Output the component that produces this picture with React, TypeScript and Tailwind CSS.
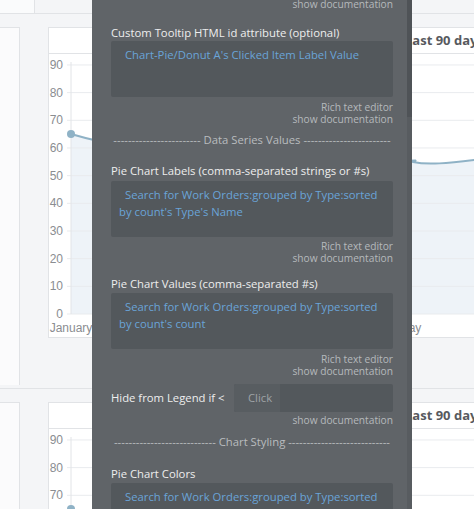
import React from "react";

const TICKS = [90, 80, 70, 60, 50, 40, 30, 20, 10, 0];

function LineChart() {
  // local coords: origin at card body top-left (x=48, y=53 on page)
  const y = (v: number) => 260 - v * 2.767;
  const line = "M22 80 C 90 100, 200 110, 300 108 S 355 106, 364 108 C 378 111, 395 110, 440 104";
  return (
    <svg width="440" height="284" viewBox="0 0 440 284" className="block">
      <path d={`${line} L 440 260 L 22 260 Z`} fill="#eef3f8" />
      {TICKS.map((t) => (
        <g key={t}>
          <line x1="18" x2="440" y1={y(t)} y2={y(t)} stroke="#e9ebee" strokeWidth="1" />
          <text x="14" y={y(t) + 4} textAnchor="end" fontSize="12" fill="#8a8d91" fontFamily="Liberation Sans, Arial, sans-serif">
            {t}
          </text>
        </g>
      ))}
      <line x1="22" x2="22" y1="8" y2="260" stroke="#e2e4e7" strokeWidth="1" />
      <path d={line} fill="none" stroke="#8fb2c6" strokeWidth="2" />
      <circle cx="22" cy="80" r="4" fill="#8fb2c6" />
      <text x="22" y="278" textAnchor="middle" fontSize="12" fill="#8a8d91" fontFamily="Liberation Sans, Arial, sans-serif">January</text>
      <text x="361" y="278" textAnchor="middle" fontSize="12" fill="#8a8d91" fontFamily="Liberation Sans, Arial, sans-serif">May</text>
    </svg>
  );
}

function DashboardRow() {
  return (
    <div className="h-[375px] border-b border-[#e1e3e6] flex items-start">
      <div className="shrink-0 mt-[13px] w-[20px] h-[358px] border-t border-r border-[#e1e3e6] bg-[#fbfbfc]" />
      <div className="shrink-0 mt-[13px] ml-[28px] w-[440px] border-t border-l border-[#e1e3e6] bg-[#fcfcfd]">
        <div className="h-[26px] border-b border-[#e1e3e6] bg-white flex items-center">
          <span className="ml-[356px] text-[13px] font-bold text-[#575a5e] whitespace-nowrap">Last 90 days</span>
        </div>
        <div className="h-[284px] border-b border-[#e1e3e6] bg-white">
          <LineChart />
        </div>
      </div>
    </div>
  );
}

function Captions({ rich = true }: { rich?: boolean }) {
  return (
    <div className="text-right text-[10.2px] leading-[12px] text-[#b5b9bc]">
      {rich && <div>Rich text editor</div>}
      <div>show documentation</div>
    </div>
  );
}

function Divider({ title, dashes }: { title: string; dashes: number }) {
  const d = "-".repeat(dashes);
  return (
    <div className="h-[16px] leading-[16px] text-[11.3px] text-[#b9bcbf] text-center whitespace-nowrap overflow-hidden">
      {d} {title} {d}
    </div>
  );
}

function RichInput({ lines, h = "h-[56px]" }: { lines: string[]; h?: string }) {
  return (
    <div className={`${h} rounded-[2px] bg-[#53585c] pl-[8px] pr-[8px] pt-[5px] text-[11.3px] leading-[17px] text-[#6aa4d8] overflow-hidden`}>
      {lines.map((l, i) => (
        <div key={i} className={i === 0 ? "pl-[6px] whitespace-nowrap" : "whitespace-nowrap"}>
          {l}
        </div>
      ))}
    </div>
  );
}

function PropertyPanel() {
  return (
    <div className="absolute left-[92px] top-0 w-[320px] h-[509px] bg-[#606468] overflow-hidden">
      <div className="absolute right-0 top-0 w-[5px] h-full bg-[#585c60]" />
      <div className="absolute right-0 top-0 w-[5px] h-[117px] bg-[#4f5357]" />
      <div className="px-[19px] -mt-[2px] text-[11.3px] text-[#eeeeee]">
        <Captions rich={false} />

        <div className="mt-[15px] leading-[16px]">Custom Tooltip HTML id attribute (optional)</div>
        <RichInput lines={["Chart-Pie/Donut A's Clicked Item Label Value"]} />
        <div className="mt-[4px]">
          <Captions />
        </div>

        <div className="mt-[7px]">
          <Divider title="Data Series Values" dashes={24} />
        </div>

        <div className="mt-[15px] mb-[2px] leading-[16px]">Pie Chart Labels (comma-separated strings or #s)</div>
        <RichInput lines={["Search for Work Orders:grouped by Type:sorted", "by count's Type's Name"]} />
        <div className="mt-[3px]">
          <Captions />
        </div>

        <div className="mt-[12px] mb-[1px] leading-[16px]">Pie Chart Values (comma-separated #s)</div>
        <RichInput lines={["Search for Work Orders:grouped by Type:sorted", "by count's count"]} />
        <div className="mt-[4px]">
          <Captions />
        </div>

        <div className="mt-[7px] flex items-center">
          <div className="w-[123px] leading-[16px]">Hide from Legend if &lt;</div>
          <div className="flex-1 h-[28px] rounded-[2px] bg-[#53585c] flex">
            <div className="w-[46px] h-full rounded-l-[2px] bg-[#585d61] pl-[14px] leading-[28px] text-[#9ea2a6]">Click</div>
          </div>
        </div>
        <div className="mt-[2px]">
          <Captions rich={false} />
        </div>

        <div className="mt-[8px]">
          <Divider title="Chart Styling" dashes={28} />
        </div>

        <div className="mt-[16px] mb-[1px] leading-[16px]">Pie Chart Colors</div>
        <RichInput lines={["Search for Work Orders:grouped by Type:sorted"]} />
      </div>
    </div>
  );
}

export default function App() {
  return (
    <div
      className="relative w-[474px] h-[509px] overflow-hidden bg-[#f4f5f7]"
      style={{ fontFamily: "'Open Sans', 'Noto Sans', sans-serif" }}
    >
      <div className="h-[14px] border-b border-[#e1e3e6] flex">
        <div className="w-[35px] h-full border-r border-[#e1e3e6] bg-[#fafbfc]" />
      </div>
      <DashboardRow />
      <DashboardRow />
      <PropertyPanel />
    </div>
  );
}
